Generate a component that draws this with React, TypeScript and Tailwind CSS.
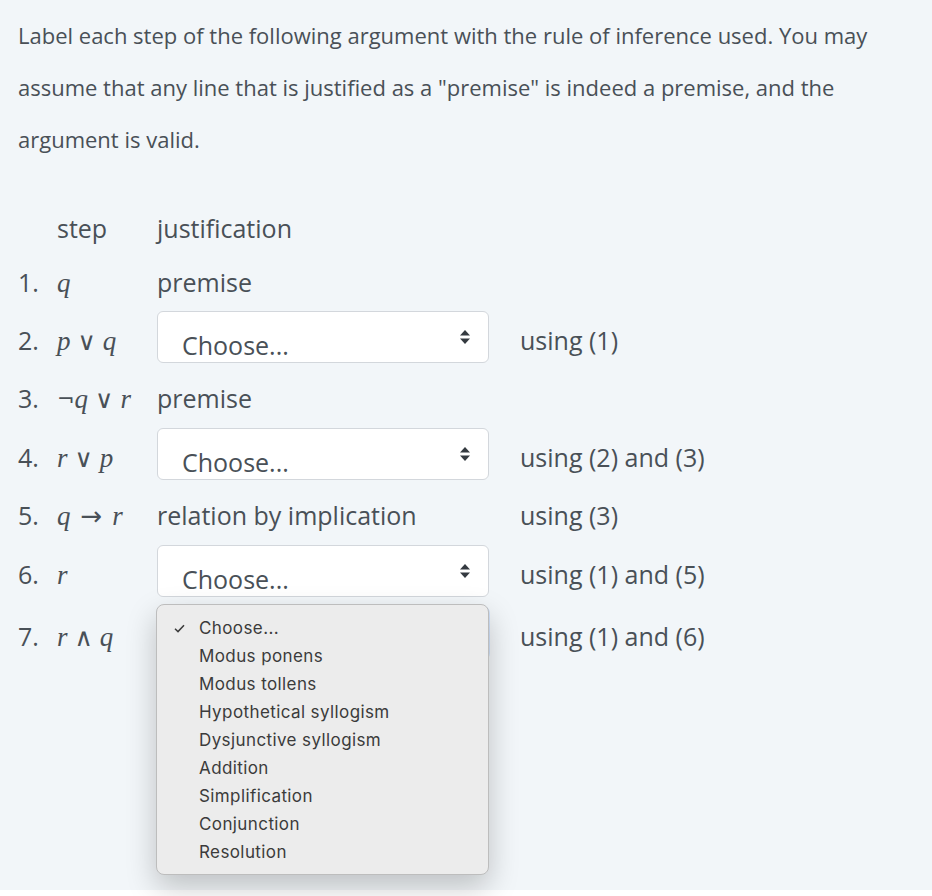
const options = [
  'Choose...',
  'Modus ponens',
  'Modus tollens',
  'Hypothetical syllogism',
  'Dysjunctive syllogism',
  'Addition',
  'Simplification',
  'Conjunction',
  'Resolution',
];

function V({ children }: { children: React.ReactNode }) {
  return <span className="font-['Liberation_Serif',serif] text-[27px] italic leading-none">{children}</span>;
}

function Op({ children, cls }: { children: React.ReactNode; cls?: string }) {
  return (
    <span className={"font-['DejaVu_Sans',sans-serif] leading-none not-italic " + (cls ?? 'mx-[7px] text-[25px]')}>
      {children}
    </span>
  );
}

function Arrows() {
  return (
    <svg width="12" height="16" viewBox="0 0 12 16" className="text-[#343a40]">
      <path d="M6 1 L11 6.5 H1 Z" fill="currentColor" />
      <path d="M6 15 L11 9.5 H1 Z" fill="currentColor" />
    </svg>
  );
}

function FakeSelect({ focused }: { focused?: boolean }) {
  return (
    <div
      className={
        'mb-[9px] flex h-[52px] w-[332px] items-center justify-between rounded-[6px] border bg-white pl-[24px] pr-[17px] pt-[18px] ' +
        (focused ? 'border-[#9ec5fe] shadow-[0_0_0_1px_rgba(13,110,253,0.15)]' : 'border-[#d3d7dc]')
      }
    >
      {/* the open list covers the focused select, so its label stays hidden */}
      <span className={focused ? 'invisible' : ''}>Choose...</span>
      <span className="-mt-[18px]">
        <Arrows />
      </span>
    </div>
  );
}

function Dropdown() {
  return (
    <div className="absolute left-[-1px] top-[-3px] z-10 w-[333px] rounded-[8px] border border-[#bdbdbd] bg-[#ececec] pb-[7px] pt-[10px] font-['Inter',sans-serif] text-[17px] tracking-[0.4px] text-[#3b3b3b] shadow-[0_12px_30px_rgba(0,0,0,0.22)]">
      {options.map((o, i) => (
        <div key={o} className="flex h-[28px] items-center">
          <span className="flex w-[42px] justify-end pr-[14px]">
            {i === 0 && (
              <svg width="11" height="9" viewBox="0 0 11 9">
                <path d="M1 4.8 L4 7.6 L10 1.2" fill="none" stroke="#3b3b3b" strokeWidth="1.5" />
              </svg>
            )}
          </span>
          <span>{o}</span>
        </div>
      ))}
    </div>
  );
}

type Row = {
  n: number;
  h: string;
  step: React.ReactNode;
  just: React.ReactNode;
  using?: string;
};

const rows: Row[] = [
  { n: 1, h: 'h-[54px]', step: <V>q</V>, just: 'premise' },
  { n: 2, h: 'h-[62px]', step: <><V>p</V><Op>∨</Op><V>q</V></>, just: <FakeSelect />, using: 'using (1)' },
  { n: 3, h: 'h-[54px]', step: <><Op cls="text-[21px]">¬</Op><V>q</V><Op>∨</Op><V>r</V></>, just: 'premise' },
  { n: 4, h: 'h-[64px]', step: <><V>r</V><Op>∨</Op><V>p</V></>, just: <FakeSelect />, using: 'using (2) and (3)' },
  {
    n: 5,
    h: 'h-[52px]',
    step: <><V>q</V><Op cls="mx-[10px] text-[26px]">→</Op><V>r</V></>,
    just: 'relation by implication',
    using: 'using (3)',
  },
  { n: 6, h: 'h-[66px]', step: <V>r</V>, just: <FakeSelect />, using: 'using (1) and (5)' },
  {
    n: 7,
    h: 'h-[58px]',
    step: <><V>r</V><Op>∧</Op><V>q</V></>,
    just: (
      <div className="relative">
        <FakeSelect focused />
        <Dropdown />
      </div>
    ),
    using: 'using (1) and (6)',
  },
];

export default function App() {
  return (
    <div className="min-h-[896px] bg-white font-['Open_Sans',sans-serif] text-[25px] text-[#495057]">
      <div className="h-[890px] bg-[#f2f6f9] px-[18px] pt-[9px]">
        <p className="text-[22px] leading-[52px]">
          Label each step of the following argument with the rule of inference used. You may
          assume that any line that is justified as a "premise" is indeed a premise, and the
          argument is valid.
        </p>

        <div className="mt-[37px]">
          <div className="flex h-[54px] items-center">
            <span className="w-[39px]" />
            <span className="w-[100px]">step</span>
            <span>justification</span>
          </div>
          {rows.map((r) => (
            <div key={r.n} className={'flex items-center ' + r.h}>
              <span className="w-[39px]">{r.n}.</span>
              <span className="flex w-[100px] items-center whitespace-nowrap">{r.step}</span>
              <div className="w-[363px]">{r.just}</div>
              <span>{r.using}</span>
            </div>
          ))}
        </div>
      </div>
    </div>
  );
}
